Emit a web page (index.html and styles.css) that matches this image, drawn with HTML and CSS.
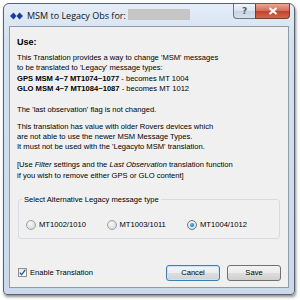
FILE: index.html
```html
<html>
<head>
    <title>MSM to Legacy Obs</title>
    <link rel="stylesheet" href="styles.css">
</head>
<body>
    <div class="window">
        <div class="titlebar">
            <svg class="app-icon" width="13" height="8" viewBox="0 0 13 8">
                <path d="M0 4 L3.5 0.5 L6.5 4 L3.5 7.5 Z" fill="#1f3a9e"/>
                <path d="M6.5 4 L9.5 0.5 L13 4 L9.5 7.5 Z" fill="#1f3a9e"/>
            </svg>
            <div class="title">MSM to Legacy Obs for:</div>
            <div class="title-hidden"></div>
            <div class="spacer"></div>
            <div class="caption-btn help">?</div>
            <div class="caption-btn close">
                <svg width="10" height="8" viewBox="0 0 10 8">
                    <path d="M1.5 1 L8.5 7 M8.5 1 L1.5 7" stroke="#fff" stroke-width="2.2"/>
                </svg>
            </div>
        </div>
        <div class="client">
            <div class="heading">Use:</div>
            <p class="para first">
                This Translation provides a way to change 'MSM' messages<br>
                to be translated to 'Legacy' message types:<br>
                <b>GPS MSM 4~7 MT1074~1077</b> - becomes MT 1004<br>
                <b>GLO MSM 4~7 MT1084~1087</b> - becomes MT 1012
            </p>
            <p class="para second">The 'last observation' flag is not changed.</p>
            <p class="para third">
                This translation has value with older Rovers devices which<br>
                are not able to use the newer MSM Message Types.<br>
                It must not be used with the 'Legacyto MSM' translation.
            </p>
            <p class="para fourth">
                [Use <i>Filter</i> settings and the <i>Last Observation</i> translation function<br>
                if you wish to remove either GPS or GLO content]
            </p>
            <fieldset class="group">
                <legend>Select Alternative Legacy message type</legend>
                <div class="radios">
                    <div class="radio"><span class="dot"></span>MT1002/1010</div>
                    <div class="radio"><span class="dot"></span>MT1003/1011</div>
                    <div class="radio"><span class="dot checked"></span>MT1004/1012</div>
                </div>
            </fieldset>
            <div class="footer">
                <div class="check">
                    <span class="box">
                        <svg width="7" height="7" viewBox="0 0 7 7">
                            <path d="M0.8 3.6 L2.6 5.8 L6.2 0.8" stroke="#2a4f9c" stroke-width="1.3" fill="none"/>
                        </svg>
                    </span>
                    Enable Translation
                </div>
                <div class="spacer"></div>
                <div class="btn default">Cancel</div>
                <div class="btn">Save</div>
            </div>
        </div>
    </div>
</body>
</html>
```

FILE: styles.css
```css
body {
    margin: 0;
    background-color: #fff;
    font-family: 'Liberation Sans', Arial, sans-serif;
}

.window {
    width: 290px;
    height: 290px;
    margin: 3px 0 0 3px;
    border: 1px solid #5a6470;
    border-radius: 6px 6px 4px 4px;
    background: linear-gradient(#e4edf8, #d3e0ef 40px, #cbd9ea);
    box-shadow: 1px 2px 3px rgba(0, 0, 0, 0.45);
    display: flex;
    flex-direction: column;
}

.titlebar {
    height: 22px;
    display: flex;
    align-items: flex-start;
    padding-right: 4px;
}

.app-icon {
    margin: 8px 0 0 6px;
}

.title {
    margin: 5px 0 0 4px;
    font-family: 'Open Sans', 'Noto Sans', sans-serif;
    font-size: 9px;
    color: #111;
}

.title-hidden {
    width: 62px;
    height: 11px;
    margin: 5px 0 0 2px;
    background-color: #c6c6c6;
}

.spacer {
    flex: 1;
}

.caption-btn {
    height: 15px;
    display: flex;
    justify-content: center;
    align-items: center;
    box-sizing: border-box;
    border: 1px solid #6d7888;
    border-top: none;
}

.help {
    width: 22px;
    border-radius: 0 0 0 4px;
    border-right: none;
    background: linear-gradient(#f1f5fa, #dbe3ee 50%, #c8d3e2 51%, #d6e0ec);
    font-family: 'DejaVu Sans', sans-serif;
    font-size: 9px;
    font-weight: bold;
    color: #55606e;
}

.close {
    width: 35px;
    border-radius: 0 0 4px 0;
    border-color: #7b3a32;
    background: linear-gradient(#e8a797, #d26a55 50%, #c0412a 51%, #d4684c);
}

.client {
    flex: 1;
    margin: 0 5px 6px 5px;
    border: 1px solid #8e9bab;
    background-color: #f0f0f0;
    padding: 10px 7px 0 7px;
    font-size: 7.6px;
    color: #000;
    display: flex;
    flex-direction: column;
}

.heading {
    font-weight: bold;
    font-size: 9px;
    line-height: 10px;
}

.para {
    margin: 0;
    line-height: 10.3px;
}

.first {
    margin-top: 6px;
}

.second {
    margin-top: 10.5px;
}

.third {
    margin-top: 6.7px;
}

.fourth {
    margin-top: 7.7px;
}

.group {
    margin: 14px 1px 0 1px;
    padding: 0 4px 8px 7px;
    border: 1px solid #d5dbe0;
    border-radius: 3px;
}

.group legend {
    padding: 0 2px;
    margin-left: -4px;
    line-height: 10px;
}

.radios {
    display: flex;
    margin-top: 15px;
}

.radio {
    width: 80.5px;
    display: flex;
    align-items: center;
    line-height: 10px;
}

.dot {
    width: 8px;
    height: 8px;
    margin-right: 3px;
    border: 1px solid #9aa0a6;
    border-radius: 50%;
    background: radial-gradient(circle at 40% 35%, #f8f8f8, #d2d2d2);
    box-sizing: content-box;
    display: flex;
    justify-content: center;
    align-items: center;
}

.dot.checked {
    border-color: #5a7a9a;
}

.dot.checked::after {
    content: '';
    width: 4px;
    height: 4px;
    border-radius: 50%;
    background: radial-gradient(circle at 40% 35%, #5fb4e8, #135f99);
}

.footer {
    margin-top: 26px;
    display: flex;
    align-items: center;
}

.check {
    display: flex;
    align-items: center;
    margin-left: 1px;
}

.box {
    width: 7px;
    height: 7px;
    margin-right: 3px;
    border: 1px solid #8f8f8f;
    background: linear-gradient(#e6e6e6, #fff);
    display: flex;
    justify-content: center;
    align-items: center;
}

.btn {
    width: 54px;
    height: 16px;
    margin-left: 7px;
    box-sizing: border-box;
    border: 1px solid #707070;
    border-radius: 3px;
    background: linear-gradient(#f2f2f2, #ebebeb 50%, #dddddd 51%, #cfcfcf);
    display: flex;
    justify-content: center;
    align-items: center;
}

.btn.default {
    border-color: #3c7fb1;
    box-shadow: inset 0 0 0 1px #c6e6f8;
    background: linear-gradient(#f4f4f4, #ececec 50%, #dedede 51%, #d2d2d2);
}
```
